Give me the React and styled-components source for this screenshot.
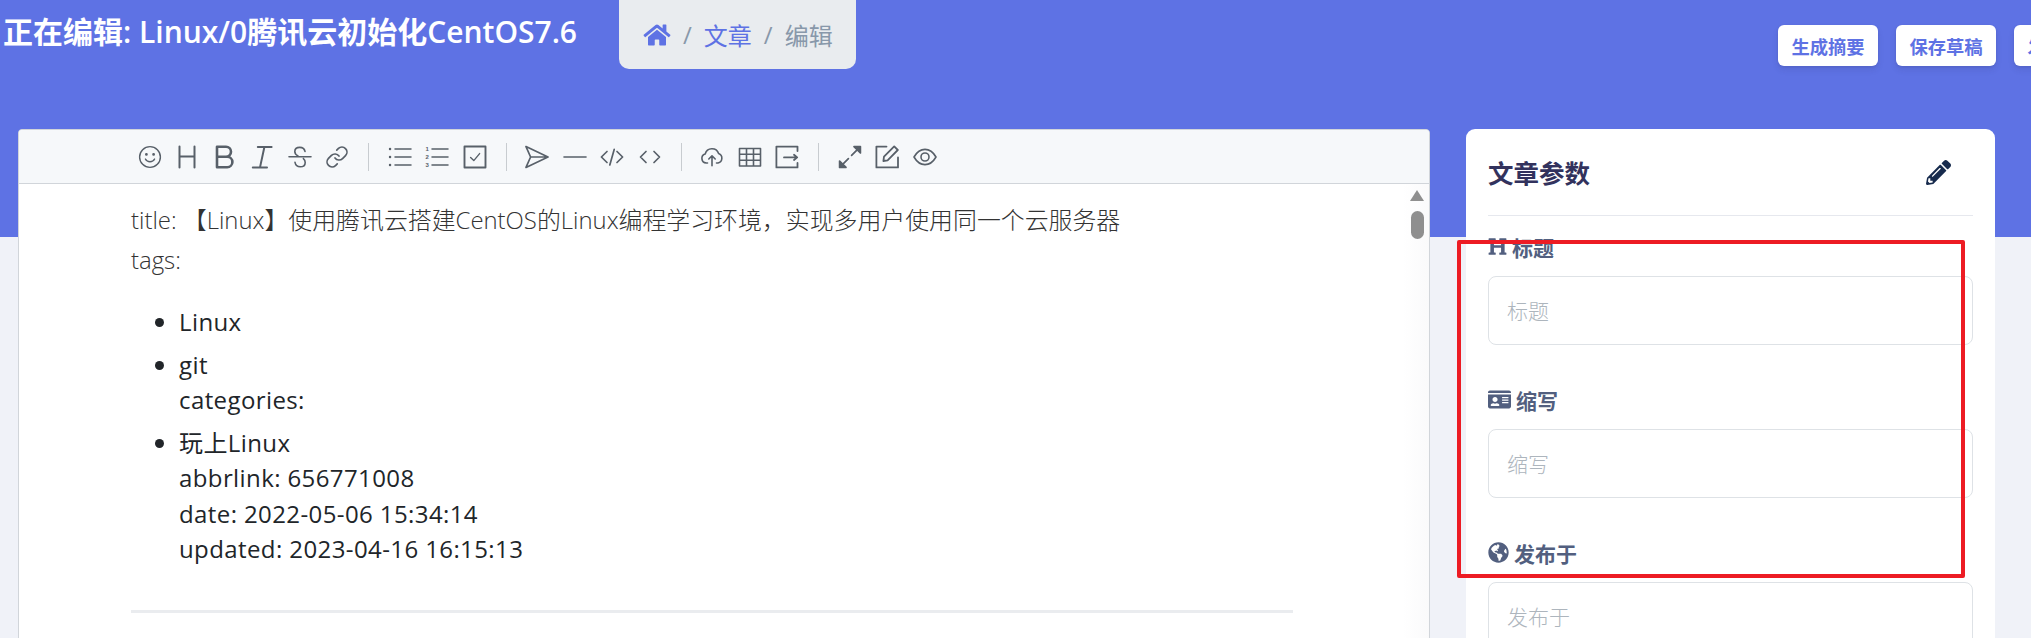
import React, { Fragment } from 'react';
import styled, { createGlobalStyle } from 'styled-components';
import { FaHome, FaPencilAlt, FaHeading, FaIdCard, FaGlobeAmericas } from 'react-icons/fa';

const GlobalStyle = createGlobalStyle`
  html, body {
    margin: 0;
    height: 100%;
    overflow: hidden;
    background: #f0f2f8;
  }
  body {
    font-family: "Open Sans", "Noto Sans CJK SC", sans-serif;
  }
`;

const Page = styled.div`
  position: relative;
  width: 2031px;
  height: 638px;
  overflow: hidden;
`;

const Hero = styled.header`
  display: flex;
  align-items: flex-start;
  height: 237px;
  padding-left: 3px;
  background: #5e72e4;
`;

const PageTitle = styled.h2`
  margin: 11px 0 0;
  font-size: 30px;
  line-height: 42px;
  font-weight: 600;
  color: #fff;
  white-space: nowrap;
`;

const Breadcrumb = styled.nav`
  display: flex;
  align-items: center;
  width: 237px;
  height: 69px;
  box-sizing: border-box;
  margin-left: 42px;
  padding-left: 24px;
  background: #e9ecef;
  border-radius: 0 0 10px 10px;
  font-size: 24px;
  color: #8898aa;
`;

const HomeIcon = styled(FaHome)`
  width: 28px;
  height: 24px;
  color: #5e72e4;
`;

const Slash = styled.span`
  margin: 0 12px;
  color: #8898aa;
`;

const CrumbLink = styled.span`
  color: ${(p) => (p.$active ? '#8898aa' : '#5e72e4')};
`;

const Actions = styled.div`
  display: flex;
  gap: 18px;
  margin: 25px -83px 0 auto;
`;

const ActionButton = styled.button`
  width: 100px;
  height: 41px;
  padding: 0;
  border: 0;
  border-radius: 6px;
  background: #fff;
  box-shadow: 0 4px 6px rgba(50, 50, 93, 0.11), 0 1px 3px rgba(0, 0, 0, 0.08);
  font-family: inherit;
  font-size: 18.3px;
  font-weight: 700;
  color: #5e72e4;
`;

const Main = styled.main`
  position: relative;
  display: flex;
  align-items: flex-start;
  gap: 36px;
  margin-top: -108px;
  padding-left: 18px;
`;

const EditorCard = styled.section`
  display: flex;
  flex-direction: column;
  width: 1412px;
  height: 520px;
  box-sizing: border-box;
  border: 1px solid #d1d5da;
  border-radius: 4px 4px 0 0;
  background: #fff;
  overflow: hidden;
`;

const Toolbar = styled.div`
  display: flex;
  align-items: center;
  flex-shrink: 0;
  height: 53px;
  padding-left: 112px;
  background: #f6f8fa;
  border-bottom: 1px solid #d1d5da;
`;

const ToolButton = styled.span`
  display: flex;
  align-items: center;
  justify-content: center;
  width: 37.5px;
  height: 24px;
  color: #586069;
`;

const ToolDivider = styled.span`
  width: 1px;
  height: 28px;
  margin: 0 12px;
  background: #c8ccd0;
`;

const Glyph = styled.svg`
  width: 24px;
  height: 24px;
  fill: none;
  stroke: currentColor;
  stroke-width: ${(p) => p.$weight || 1.6};
  stroke-linecap: round;
  stroke-linejoin: round;
`;

const OlNumber = styled.text`
  font-family: "Liberation Sans", sans-serif;
  font-size: 6px;
  font-weight: 700;
  fill: currentColor;
  stroke: none;
`;

const EditorBody = styled.div`
  display: flex;
  flex: 1;
  min-height: 0;
`;

const Content = styled.article`
  flex: 1;
  padding: 15.5px 0 0 112px;
  color: #212529;
`;

const MetaLine = styled.p`
  margin: 0;
  font-size: 23.9px;
  line-height: 40px;
  font-weight: 300;
  color: #333;
  white-space: nowrap;
`;

const MetaList = styled.ul`
  margin: 24.5px 0 43px;
  padding-left: 48px;
  font-size: 24px;
  letter-spacing: 0.4px;
`;

const MetaItem = styled.li`
  margin-bottom: 7px;
  line-height: 35.5px;
  white-space: pre-line;
`;

const Rule = styled.hr`
  width: 1162px;
  height: 3px;
  margin: 0;
  border: 0;
  background: #eaecef;
`;

const ScrollTrack = styled.div`
  display: flex;
  flex-direction: column;
  align-items: center;
  flex-shrink: 0;
  width: 26px;
  padding-left: 2px;
  box-sizing: border-box;
  background: linear-gradient(to right, #fff, #fafafb);
`;

const ScrollArrow = styled.span`
  width: 0;
  height: 0;
  margin-top: 6px;
  border-left: 7px solid transparent;
  border-right: 7px solid transparent;
  border-bottom: 11px solid #8f8f8f;
`;

const ScrollThumb = styled.span`
  width: 13px;
  height: 28px;
  margin-top: 10px;
  border-radius: 7px;
  background: #8f8f8f;
`;

const ParamsCard = styled.aside`
  width: 529px;
  height: 520px;
  box-sizing: border-box;
  padding: 0 22px;
  border-radius: 9px 9px 0 0;
  background: #fff;
`;

const ParamsHeader = styled.div`
  display: flex;
  align-items: center;
  justify-content: space-between;
  height: 86px;
  padding-right: 22px;
  border-bottom: 1px solid #e6e8ee;
`;

const ParamsTitle = styled.h3`
  margin: 0 0 2px;
  font-size: 25.5px;
  font-weight: 700;
  color: #32325d;
`;

const EditIcon = styled(FaPencilAlt)`
  width: 25px;
  height: 25px;
  color: #172b4d;
`;

const FieldList = styled.div`
  display: flex;
  flex-direction: column;
  gap: 40.5px;
  padding-top: 16.5px;
`;

const FieldLabel = styled.label`
  display: flex;
  align-items: center;
  gap: 5px;
  height: 28px;
  margin-bottom: 15.5px;
  font-size: 21px;
  font-weight: 700;
  color: #525f7f;
  svg {
    width: ${(p) => p.$iconSize}px;
    height: ${(p) => p.$iconSize}px;
  }
`;

const FieldInput = styled.input`
  display: block;
  width: 100%;
  height: 69px;
  box-sizing: border-box;
  padding: 0 18px;
  border: 1px solid #dee2e6;
  border-radius: 8px;
  background: #fff;
  font-family: inherit;
  font-size: 21px;
  outline: none;
  &::placeholder {
    color: #adb5bd;
    font-weight: 300;
  }
`;

// red box somebody drew on top of the screenshot
const Annotation = styled.div`
  position: absolute;
  left: 1457px;
  top: 240px;
  width: 508px;
  height: 338px;
  box-sizing: border-box;
  border: 4px solid #ed1c24;
  border-radius: 2px;
  pointer-events: none;
`;

const Icon = ({ weight, children }) => (
  <Glyph viewBox="0 0 24 24" $weight={weight}>
    {children}
  </Glyph>
);

const toolGroups = [
  [
    <Icon weight={1.4}>
      <circle cx="12" cy="12" r="10.4" />
      <circle cx="8.4" cy="9.4" r="0.7" />
      <circle cx="15.6" cy="9.4" r="0.7" />
      <path d="M7.4 14a5.2 5.2 0 0 0 9.2 0" />
    </Icon>,
    <Icon weight={2}>
      <path d="M4.5 1.5V22.5M19.5 1.5V22.5M4.5 11.5H19.5" />
    </Icon>,
    <Icon weight={2.6}>
      <path d="M4 1.8H13a5 5 0 0 1 0 10H4ZM4 11.8H14.2a5.2 5.2 0 0 1 0 10.4H4Z" />
    </Icon>,
    <Icon weight={2}>
      <path d="M7.8 2H21.6M2.8 22.4H17M14.4 2L10 22.4" />
    </Icon>,
    <Icon weight={1.6}>
      <path d="M1 11.8H23M17 6.4C16.4 3.6 14.2 2.4 11.8 2.4C8.8 2.4 6.8 4.2 6.8 6.6C6.8 8.6 8 10 10 11M7 17.4C7.6 20.4 9.8 21.8 12.2 21.8C15.2 21.8 17.2 20 17.2 17.4C17.2 15.8 16.6 14.6 15.4 13.6" />
    </Icon>,
    <Icon weight={1.7}>
      <path d="M10 13a5 5 0 0 0 7.54.54l3-3a5 5 0 0 0-7.07-7.07l-1.72 1.71" />
      <path d="M14 11a5 5 0 0 0-7.54-.54l-3 3a5 5 0 0 0 7.07 7.07l1.71-1.71" />
    </Icon>,
  ],
  [
    <Icon weight={1.5}>
      <path d="M7 4H23M7 12H23M7 20H23" />
      <path d="M2 4h.1M2 12h.1M2 20h.1" strokeWidth="2.4" />
    </Icon>,
    <Icon weight={1.5}>
      <path d="M7 4H23M7 12H23M7 20H23" />
      <OlNumber x="0.5" y="6">1</OlNumber>
      <OlNumber x="0.5" y="14">2</OlNumber>
      <OlNumber x="0.5" y="22">3</OlNumber>
    </Icon>,
    <Icon weight={1.9}>
      <rect x="1.5" y="1.5" width="21" height="21" />
      <path d="M7.6 12.4L10.8 15.6L16.6 8.6" strokeWidth="1.4" />
    </Icon>,
  ],
  [
    <Icon weight={1.7}>
      <path d="M1 1.6L23 12L1 22.4L5.6 12ZM5.6 12H23" />
    </Icon>,
    <Icon weight={1.6}>
      <path d="M1 12H23" />
    </Icon>,
    <Icon weight={1.7}>
      <path d="M7 6.5L1.4 12L7 17.5M17 6.5L22.6 12L17 17.5M14.2 4.4L9.8 20" />
    </Icon>,
    <Icon weight={1.7}>
      <path d="M8 6.5L2.5 12L8 17.5M16 6.5L21.5 12L16 17.5" />
    </Icon>,
  ],
  [
    <Icon weight={1.6}>
      <path d="M7.5 18H6.2A4.6 4.6 0 0 1 5.2 9A7 7 0 0 1 18.6 8.6A4.9 4.9 0 0 1 18 18H16.5" />
      <path d="M12 20.8V11M8.8 14L12 10.8L15.2 14" />
    </Icon>,
    <Icon weight={1.6}>
      <path d="M1.5 3.5H22.5V21H1.5ZM1.5 9.3H22.5M1.5 15.2H22.5M8.5 3.5V21M15.5 3.5V21" />
    </Icon>,
    <Icon weight={1.8}>
      <path d="M22.5 6V1.6H1.4V22.4H22.5V18M9 12.4H22M19 9.8L22.2 12.4L19 15" />
    </Icon>,
  ],
  [
    <Icon weight={1.7}>
      <path d="M13.6 10.4L20.6 3.4M10.4 13.6L3.4 20.6" />
      <path d="M16 1.6H22.4V8ZM8 22.4H1.6V16Z" fill="currentColor" />
    </Icon>,
    <Icon weight={1.8}>
      <path d="M11.5 1.6H1.4V22.4H23V12.5" />
      <path d="M19.2 1.4L22.8 5L12.6 15.4L8.4 16L9 11.6Z" />
    </Icon>,
    <Icon weight={1.6}>
      <path d="M1 12C4 6.8 8 4.4 12 4.4S20 6.8 23 12C20 17.2 16 19.6 12 19.6S4 17.2 1 12Z" />
      <circle cx="12" cy="12" r="4" />
    </Icon>,
  ],
];

const fields = [
  { name: '标题', icon: <FaHeading />, iconSize: 19 },
  { name: '缩写', icon: <FaIdCard />, iconSize: 23 },
  { name: '发布于', icon: <FaGlobeAmericas />, iconSize: 21 },
];

const App = () => (
  <Page>
    <GlobalStyle />
    <Hero>
      <PageTitle>正在编辑: Linux/0腾讯云初始化CentOS7.6</PageTitle>
      <Breadcrumb>
        <HomeIcon />
        <Slash>/</Slash>
        <CrumbLink>文章</CrumbLink>
        <Slash>/</Slash>
        <CrumbLink $active>编辑</CrumbLink>
      </Breadcrumb>
      <Actions>
        <ActionButton>生成摘要</ActionButton>
        <ActionButton>保存草稿</ActionButton>
        <ActionButton>发布文章</ActionButton>
      </Actions>
    </Hero>
    <Main>
      <EditorCard>
        <Toolbar>
          {toolGroups.map((group, i) => (
            <Fragment key={i}>
              {i > 0 && <ToolDivider />}
              {group.map((icon, j) => (
                <ToolButton key={j}>{icon}</ToolButton>
              ))}
            </Fragment>
          ))}
        </Toolbar>
        <EditorBody>
          <Content>
            <MetaLine>title: 【Linux】使用腾讯云搭建CentOS的Linux编程学习环境，实现多用户使用同一个云服务器</MetaLine>
            <MetaLine>tags:</MetaLine>
            <MetaList>
              <MetaItem>Linux</MetaItem>
              <MetaItem>{'git\ncategories:'}</MetaItem>
              <MetaItem>{'玩上Linux\nabbrlink: 656771008\ndate: 2022-05-06 15:34:14\nupdated: 2023-04-16 16:15:13'}</MetaItem>
            </MetaList>
            <Rule />
          </Content>
          <ScrollTrack>
            <ScrollArrow />
            <ScrollThumb />
          </ScrollTrack>
        </EditorBody>
      </EditorCard>
      <ParamsCard>
        <ParamsHeader>
          <ParamsTitle>文章参数</ParamsTitle>
          <EditIcon />
        </ParamsHeader>
        <FieldList>
          {fields.map((field) => (
            <div key={field.name}>
              <FieldLabel $iconSize={field.iconSize}>
                {field.icon}
                {field.name}
              </FieldLabel>
              <FieldInput placeholder={field.name} />
            </div>
          ))}
        </FieldList>
      </ParamsCard>
    </Main>
    <Annotation />
  </Page>
);

export default App;
